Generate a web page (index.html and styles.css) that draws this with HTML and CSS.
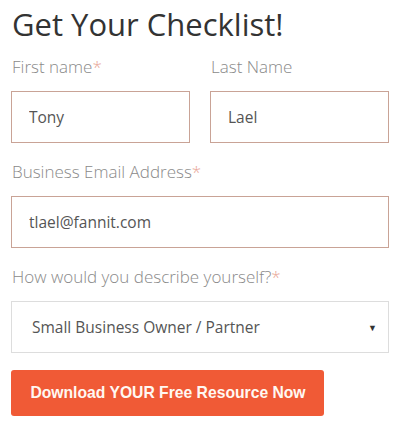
FILE: index.html
```html
<!DOCTYPE html>
<html>
<head>
<meta charset="utf-8">
<link rel="stylesheet" href="styles.css">
</head>
<body>
<form class="form">
  <h1 class="title">Get Your Checklist!</h1>
  <div class="row">
    <div class="field">
      <label class="label">First name<span class="req">*</span></label>
      <input class="input" type="text" value="Tony">
    </div>
    <div class="field">
      <label class="label">Last Name</label>
      <input class="input" type="text" value="Lael">
    </div>
  </div>
  <div class="field">
    <label class="label">Business Email Address<span class="req">*</span></label>
    <input class="input" type="text" value="tlael@fannit.com">
  </div>
  <div class="field">
    <label class="label">How would you describe yourself?<span class="req">*</span></label>
    <div class="select">
      <span class="select-text">Small Business Owner / Partner</span>
      <span class="arrow">&#9660;</span>
    </div>
  </div>
  <button class="btn" type="button">Download YOUR Free Resource Now</button>
</form>
</body>
</html>
```
FILE: styles.css
```css
html, body {
  margin: 0;
  padding: 0;
  background: #ffffff;
}
.form {
  width: 378px;
  padding: 4px 0 0 11px;
  display: flex;
  flex-direction: column;
  font-family: "Open Sans", sans-serif;
}
.title {
  margin: 0 0 11px 1px;
  font-size: 31px;
  line-height: 40px;
  font-weight: 400;
  color: #333333;
}
.row {
  display: flex;
  gap: 20px;
}
.row .field {
  flex: 1;
}
.field {
  display: flex;
  flex-direction: column;
  margin-bottom: 17px;
}
.label {
  font-size: 17px;
  line-height: 24px;
  font-weight: 300;
  color: #8a8a8a;
  margin: 0 0 12px 1px;
}
.req {
  color: #e8a595;
}
.input {
  box-sizing: border-box;
  height: 52px;
  width: 100%;
  margin: 0;
  border: 1px solid #c9a396;
  padding: 0 17px;
  font-family: "Open Sans", sans-serif;
  font-size: 15.5px;
  color: #555555;
  background: #ffffff;
  outline: none;
}
.select {
  box-sizing: border-box;
  height: 52px;
  border: 1px solid #dddddd;
  display: flex;
  align-items: center;
  justify-content: space-between;
  padding: 0 11px 0 20px;
  font-size: 15.5px;
  color: #555555;
}
.arrow {
  font-size: 9px;
  color: #333333;
}
.btn {
  align-self: flex-start;
  box-sizing: border-box;
  width: 313px;
  height: 46px;
  margin: 0;
  border: none;
  border-radius: 3px;
  background: #f05a36;
  color: #fff8f2;
  font-family: "Liberation Sans", Arial, sans-serif;
  font-weight: 700;
  font-size: 15.7px;
  padding: 0 0 0 1px;
  text-align: center;
}
```
